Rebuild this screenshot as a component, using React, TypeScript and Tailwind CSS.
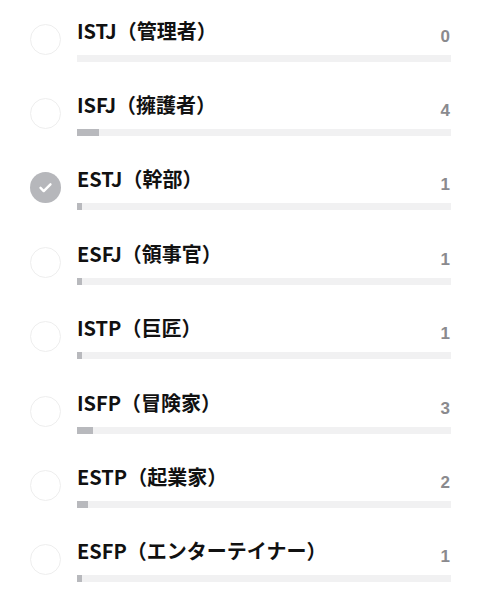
const options = [
  { label: 'ISTJ（管理者）', count: 0 },
  { label: 'ISFJ（擁護者）', count: 4 },
  { label: 'ESTJ（幹部）', count: 1, checked: true },
  { label: 'ESFJ（領事官）', count: 1 },
  { label: 'ISTP（巨匠）', count: 1 },
  { label: 'ISFP（冒険家）', count: 3 },
  { label: 'ESTP（起業家）', count: 2 },
  { label: 'ESFP（エンターテイナー）', count: 1 },
]

function Radio({ checked }: { checked?: boolean }) {
  if (checked) {
    return (
      <div className="w-[31px] h-[31px] rounded-full bg-[#b6b7bb] flex items-center justify-center shrink-0">
        <svg className="w-[17px] h-[17px]" viewBox="0 0 24 24" fill="none" stroke="white" strokeWidth={3.4}>
          <path strokeLinecap="round" strokeLinejoin="round" d="M5 12.5l4.5 4.5L19 7.5" />
        </svg>
      </div>
    )
  }
  return <div className="w-[31px] h-[31px] rounded-full border-[1.5px] border-[#eeeeee] shrink-0" />
}

function OptionRow({ label, count, checked }: { label: string; count: number; checked?: boolean }) {
  const pct = count * 1.47
  return (
    <div className="flex items-center h-[74.4px] pl-[30px] pr-[30px]">
      <Radio checked={checked} />
      <div className="flex-1 ml-[16px] pt-[1px]">
        <div className="flex items-start justify-between">
          <span className="text-[20px] leading-[26px] font-bold text-[#111111]">{label}</span>
          <span
            className="text-[17px] leading-none font-bold text-[#8a8a8e] mt-[10px] pr-[1px]"
            style={{ fontFamily: '"Liberation Sans", Arial, sans-serif' }}
          >
            {count}
          </span>
        </div>
        <div className="mt-[10px] h-[7px] bg-[#f1f1f2] overflow-hidden">
          <div className="h-full bg-[#b8b9bd]" style={{ width: `${Math.max(pct, 0.8)}%`, display: count ? 'block' : 'none' }} />
        </div>
      </div>
    </div>
  )
}

export default function App() {
  return (
    <div
      className="bg-white w-[481px] h-[600px] overflow-hidden pt-[2px]"
      style={{ fontFamily: '"Noto Sans CJK JP", "Noto Sans", sans-serif' }}
    >
      {options.map(o => (
        <OptionRow key={o.label} {...o} />
      ))}
    </div>
  )
}
